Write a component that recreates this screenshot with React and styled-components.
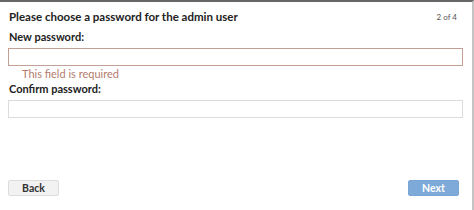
import React from 'react';
import styled, { createGlobalStyle } from 'styled-components';

const Global = createGlobalStyle`
    html, body {
        margin: 0;
        padding: 0;
        background: #fff;
    }
    body {
        font-family: Lato, "Liberation Sans", sans-serif;
        color: #222;
    }
`;

const Frame = styled.div`
    width: 474px;
    height: 210px;
    box-sizing: border-box;
    border-top: 2px solid #666;
    border-right: 2px solid #c4c4c4;
    position: relative;
    display: flex;
    flex-direction: column;
    padding: 0 11px 0 8px;
    overflow: hidden;
`;

const TopAccent = styled.div`
    position: absolute;
    top: -2px;
    left: 0;
    width: 343px;
    height: 2px;
    background: #8c6d5e;
`;

const Header = styled.div`
    display: flex;
    justify-content: space-between;
    align-items: center;
    height: 28px;
    padding: 1px 0 0 1px;
    box-sizing: border-box;
`;

const Title = styled.div`
    font-size: 11.5px;
    font-weight: 700;
`;

const Step = styled.div`
    font-size: 8px;
    color: #555;
    margin-right: 4px;
`;

const Label = styled.label`
    display: block;
    font-size: 11px;
    font-weight: 700;
    padding-left: 1px;
    line-height: 14px;
    margin-bottom: 4px;
`;

const Input = styled.input`
    display: block;
    width: 455px;
    height: 18px;
    box-sizing: border-box;
    border: 1px solid ${p => (p.$invalid ? '#c2a096' : '#dcdcdc')};
    background: #fff;
    outline: none;
    margin: 0;
`;

const Error = styled.div`
    font-size: 11px;
    color: #b47b6c;
    padding-left: 14px;
    height: 16px;
    line-height: 15px;
`;

const Footer = styled.div`
    margin-top: auto;
    display: flex;
    justify-content: space-between;
    padding-right: 2px;
    margin-bottom: 14px;
`;

const Button = styled.button`
    width: 51px;
    height: 16px;
    box-sizing: border-box;
    padding: 0;
    font-family: inherit;
    font-size: 10.5px;
    font-weight: 700;
    border-radius: 2px;
    border: 1px solid ${p => (p.$primary ? '#7aa6d6' : '#dcdcdc')};
    background: ${p => (p.$primary ? '#7eaad9' : '#f2f2f2')};
    color: ${p => (p.$primary ? '#fff' : '#333')};
`;

export default function App() {
    return (
        <>
            <Global />
            <Frame>
                <TopAccent />
                <Header>
                    <Title>Please choose a password for the admin user</Title>
                    <Step>2 of 4</Step>
                </Header>
                <Label>New password:</Label>
                <Input type="password" $invalid />
                <Error>This field is required</Error>
                <Label>Confirm password:</Label>
                <Input type="password" />
                <Footer>
                    <Button>Back</Button>
                    <Button $primary>Next</Button>
                </Footer>
            </Frame>
        </>
    );
}
